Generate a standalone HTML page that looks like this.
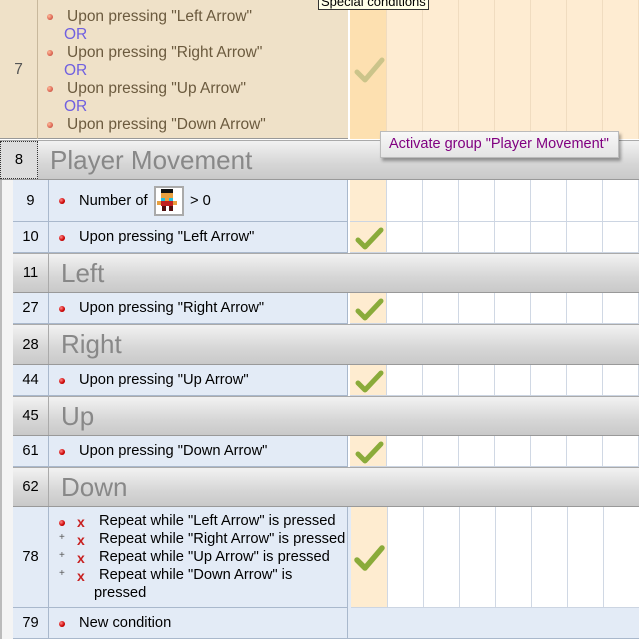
<!DOCTYPE html>
<html><head><meta charset="utf-8">
<style>
*{margin:0;padding:0;box-sizing:border-box}
body{width:639px;height:639px;overflow:hidden;background:#fff;font-family:"Liberation Sans","DejaVu Sans",sans-serif;font-size:14.7px;color:#000;position:relative}
.a{position:absolute}
.strip{left:0;top:140px;width:13px;height:499px;background:#f4f4f4;border-left:2px solid #bbb}
.num{position:absolute;display:flex;align-items:center;justify-content:center;font-size:14.7px}
.row{position:absolute;left:13px;width:335px;background:#e3ebf6;border-bottom:1px solid #a9b8cc}
.row .n{position:absolute;left:0;top:0;bottom:0;width:36px;border-right:1px solid #a9b8cc;display:flex;align-items:center;justify-content:center}
.row .c{position:absolute;left:36px;top:0;bottom:0;right:0;border-right:1px solid #a9b8cc}
.act{position:absolute;left:350px;width:289px;background:linear-gradient(to right,#feecd0 0 36px,transparent 36px),repeating-linear-gradient(to right,#d0d8e4 0 1px,#fff 1px 36px);border-bottom:1px solid #ccd5e2}
.actbg{position:absolute;left:348px;width:291px;background:#e3ebf6}
.grp{position:absolute;left:13px;width:626px;height:40px;background:linear-gradient(#f2f2f2,#d6d6d6 60%,#c9c9c9);border-bottom:1px solid #999;border-top:1px solid #aaa}
.grp .n{position:absolute;left:0;top:0;bottom:0;width:36px;border-right:1px solid #aaa;display:flex;align-items:center;justify-content:center;font-size:14.7px}
.grp .t{position:absolute;left:48px;top:4px;font-size:26px;color:#888}
.dot{position:absolute;width:6px;height:6px;border-radius:50%;background:radial-gradient(circle at 35% 35%,#f88,#c00 60%,#800)}
.dot2{background:radial-gradient(circle at 35% 35%,#fb9,#d65 60%,#a43)}
.plus{position:absolute;font-size:10px;color:#555}
.x{position:absolute;color:#c82020;font-weight:bold;font-size:14px}
.tx{position:absolute;white-space:nowrap}
.r7{font-size:15.5px}
.or{position:absolute;color:#7060e0;font-size:15.5px}
</style></head><body>
<div class="a" style="left:0;top:0;width:348px;height:139px;background:#efe1c8;border-bottom:1px solid #999"></div>
<div class="a" style="left:37px;top:0;width:1px;height:139px;background:#c8b89c"></div>
<div class="num" style="left:0;top:0;width:37px;height:139px;color:#555;font-size:15.5px">7</div>
<div class="a" style="left:350px;top:0;width:289px;height:139px;background:linear-gradient(to right,#fde0b0 0 36px,transparent 36px),repeating-linear-gradient(to right,#f0dcc0 0 1px,#feecd2 1px 36px)"></div>
<div class="dot dot2" style="left:47px;top:14px"></div><div class="tx r7" style="left:67px;top:8px;color:#6b5a3e">Upon pressing "Left Arrow"</div>
<div class="or" style="left:64px;top:26px">OR</div>
<div class="dot dot2" style="left:47px;top:50px"></div><div class="tx r7" style="left:67px;top:44px;color:#6b5a3e">Upon pressing "Right Arrow"</div>
<div class="or" style="left:64px;top:62px">OR</div>
<div class="dot dot2" style="left:47px;top:86px"></div><div class="tx r7" style="left:67px;top:80px;color:#6b5a3e">Upon pressing "Up Arrow"</div>
<div class="or" style="left:64px;top:98px">OR</div>
<div class="dot dot2" style="left:47px;top:122px"></div><div class="tx r7" style="left:67px;top:116px;color:#6b5a3e">Upon pressing "Down Arrow"</div>
<svg class="a" style="left:353px;top:54px" width="32" height="32"><path d="M4 18 L12 26 L29 6" fill="none" stroke="#cbc48a" stroke-width="5" stroke-linecap="round" stroke-linejoin="round"/></svg>
<div class="a" style="left:318px;top:-6px;height:16px;padding:0 2px;border:1px solid #333;background:#ffffe8;font-size:13px;line-height:14px">Special conditions</div>

<div class="strip a"></div>

<div class="grp" style="left:0;width:639px;top:140px"><div class="n" style="width:38px;border:1px dotted #333;background:#ddd">8</div><div class="t" style="left:50px">Player Movement</div></div>

<div class="row" style="top:180px;height:42px"><div class="n">9</div><div class="c"></div></div>
<div class="act" style="top:180px;height:42px"></div>
<div class="dot" style="left:59px;top:198px"></div><div class="tx" style="left:79px;top:193px">Number of</div>
<div class="a" style="left:154px;top:186px;width:30px;height:30px;border:2px solid #aaa;background:#fff"></div>
<svg class="a" style="left:157px;top:189px" width="24" height="24" shape-rendering="crispEdges">
<rect x="4" y="0" width="12" height="4" fill="#111"/><rect x="4" y="4" width="12" height="5" fill="#e8a040"/>
<rect x="4" y="9" width="4" height="3" fill="#20c0e0"/><rect x="12" y="9" width="4" height="3" fill="#20c0e0"/><rect x="8" y="9" width="4" height="3" fill="#e8a040"/>
<rect x="0" y="12" width="20" height="4" fill="#e8a040"/><rect x="4" y="12" width="12" height="5" fill="#c02020"/>
<rect x="5" y="17" width="4" height="5" fill="#501010"/><rect x="12" y="17" width="4" height="5" fill="#501010"/></svg>
<div class="tx" style="left:190px;top:193px">&gt; 0</div>

<div class="row" style="top:222px;height:31px"><div class="n">10</div><div class="c"></div></div>
<div class="act" style="top:222px;height:31px"></div>
<div class="dot" style="left:59px;top:235px"></div><div class="tx" style="left:79px;top:229px">Upon pressing "Left Arrow"</div>

<div class="grp" style="top:253px"><div class="n">11</div><div class="t">Left</div></div>

<div class="row" style="top:293px;height:31px"><div class="n">27</div><div class="c"></div></div>
<div class="act" style="top:293px;height:31px"></div>
<div class="dot" style="left:59px;top:306px"></div><div class="tx" style="left:79px;top:300px">Upon pressing "Right Arrow"</div>

<div class="grp" style="top:324px;height:41px"><div class="n">28</div><div class="t">Right</div></div>

<div class="row" style="top:365px;height:31px"><div class="n">44</div><div class="c"></div></div>
<div class="act" style="top:365px;height:31px"></div>
<div class="dot" style="left:59px;top:378px"></div><div class="tx" style="left:79px;top:372px">Upon pressing "Up Arrow"</div>

<div class="grp" style="top:396px"><div class="n">45</div><div class="t">Up</div></div>

<div class="row" style="top:436px;height:31px"><div class="n">61</div><div class="c"></div></div>
<div class="act" style="top:436px;height:31px"></div>
<div class="dot" style="left:59px;top:449px"></div><div class="tx" style="left:79px;top:443px">Upon pressing "Down Arrow"</div>

<div class="grp" style="top:467px"><div class="n">62</div><div class="t">Down</div></div>

<div class="row" style="top:507px;height:101px"><div class="n">78</div><div class="c"></div></div>
<div class="actbg" style="top:507px;height:101px"></div>
<div class="act" style="top:507px;height:101px;left:351px"></div>
<div class="dot" style="left:59px;top:520px"></div>
<div class="plus" style="left:59px;top:532px">+</div><div class="plus" style="left:59px;top:550px">+</div><div class="plus" style="left:59px;top:568px">+</div>
<div class="x" style="left:77px;top:514px">x</div><div class="x" style="left:77px;top:532px">x</div><div class="x" style="left:77px;top:550px">x</div><div class="x" style="left:77px;top:568px">x</div>
<div class="tx" style="left:99px;top:513px">Repeat while "Left Arrow" is pressed</div>
<div class="tx" style="left:99px;top:531px">Repeat while "Right Arrow" is pressed</div>
<div class="tx" style="left:99px;top:549px">Repeat while "Up Arrow" is pressed</div>
<div class="tx" style="left:99px;top:567px">Repeat while "Down Arrow" is</div>
<div class="tx" style="left:94px;top:585px">pressed</div>

<div class="row" style="top:608px;height:31px;width:626px"><div class="n">79</div><div class="c" style="width:299px;right:auto"></div></div>
<div class="dot" style="left:59px;top:621px"></div><div class="tx" style="left:79px;top:615px">New condition</div>

<svg class="a" style="left:353px;top:222px" width="32" height="32"><path d="M5 18 L12 25 L28 8" fill="none" stroke="#8aab3a" stroke-width="5" stroke-linecap="round" stroke-linejoin="round"/></svg>
<svg class="a" style="left:353px;top:293px" width="32" height="32"><path d="M5 18 L12 25 L28 8" fill="none" stroke="#8aab3a" stroke-width="5" stroke-linecap="round" stroke-linejoin="round"/></svg>
<svg class="a" style="left:353px;top:365px" width="32" height="32"><path d="M5 18 L12 25 L28 8" fill="none" stroke="#8aab3a" stroke-width="5" stroke-linecap="round" stroke-linejoin="round"/></svg>
<svg class="a" style="left:353px;top:436px" width="32" height="32"><path d="M5 18 L12 25 L28 8" fill="none" stroke="#8aab3a" stroke-width="5" stroke-linecap="round" stroke-linejoin="round"/></svg>
<svg class="a" style="left:352px;top:540px" width="34" height="34"><path d="M5 20 L13 28 L30 8" fill="none" stroke="#8aab3a" stroke-width="5.5" stroke-linecap="round" stroke-linejoin="round"/></svg>

<div class="a" style="left:380px;top:131px;width:239px;height:27px;background:linear-gradient(#f8f8f8,#e4e4e4);border:1px solid #bbb;box-shadow:2px 3px 3px rgba(0,0,0,0.35);color:#800080;font-size:14.5px;line-height:25px;padding-left:8px;white-space:nowrap">Activate group "Player Movement"</div>
</body></html>
